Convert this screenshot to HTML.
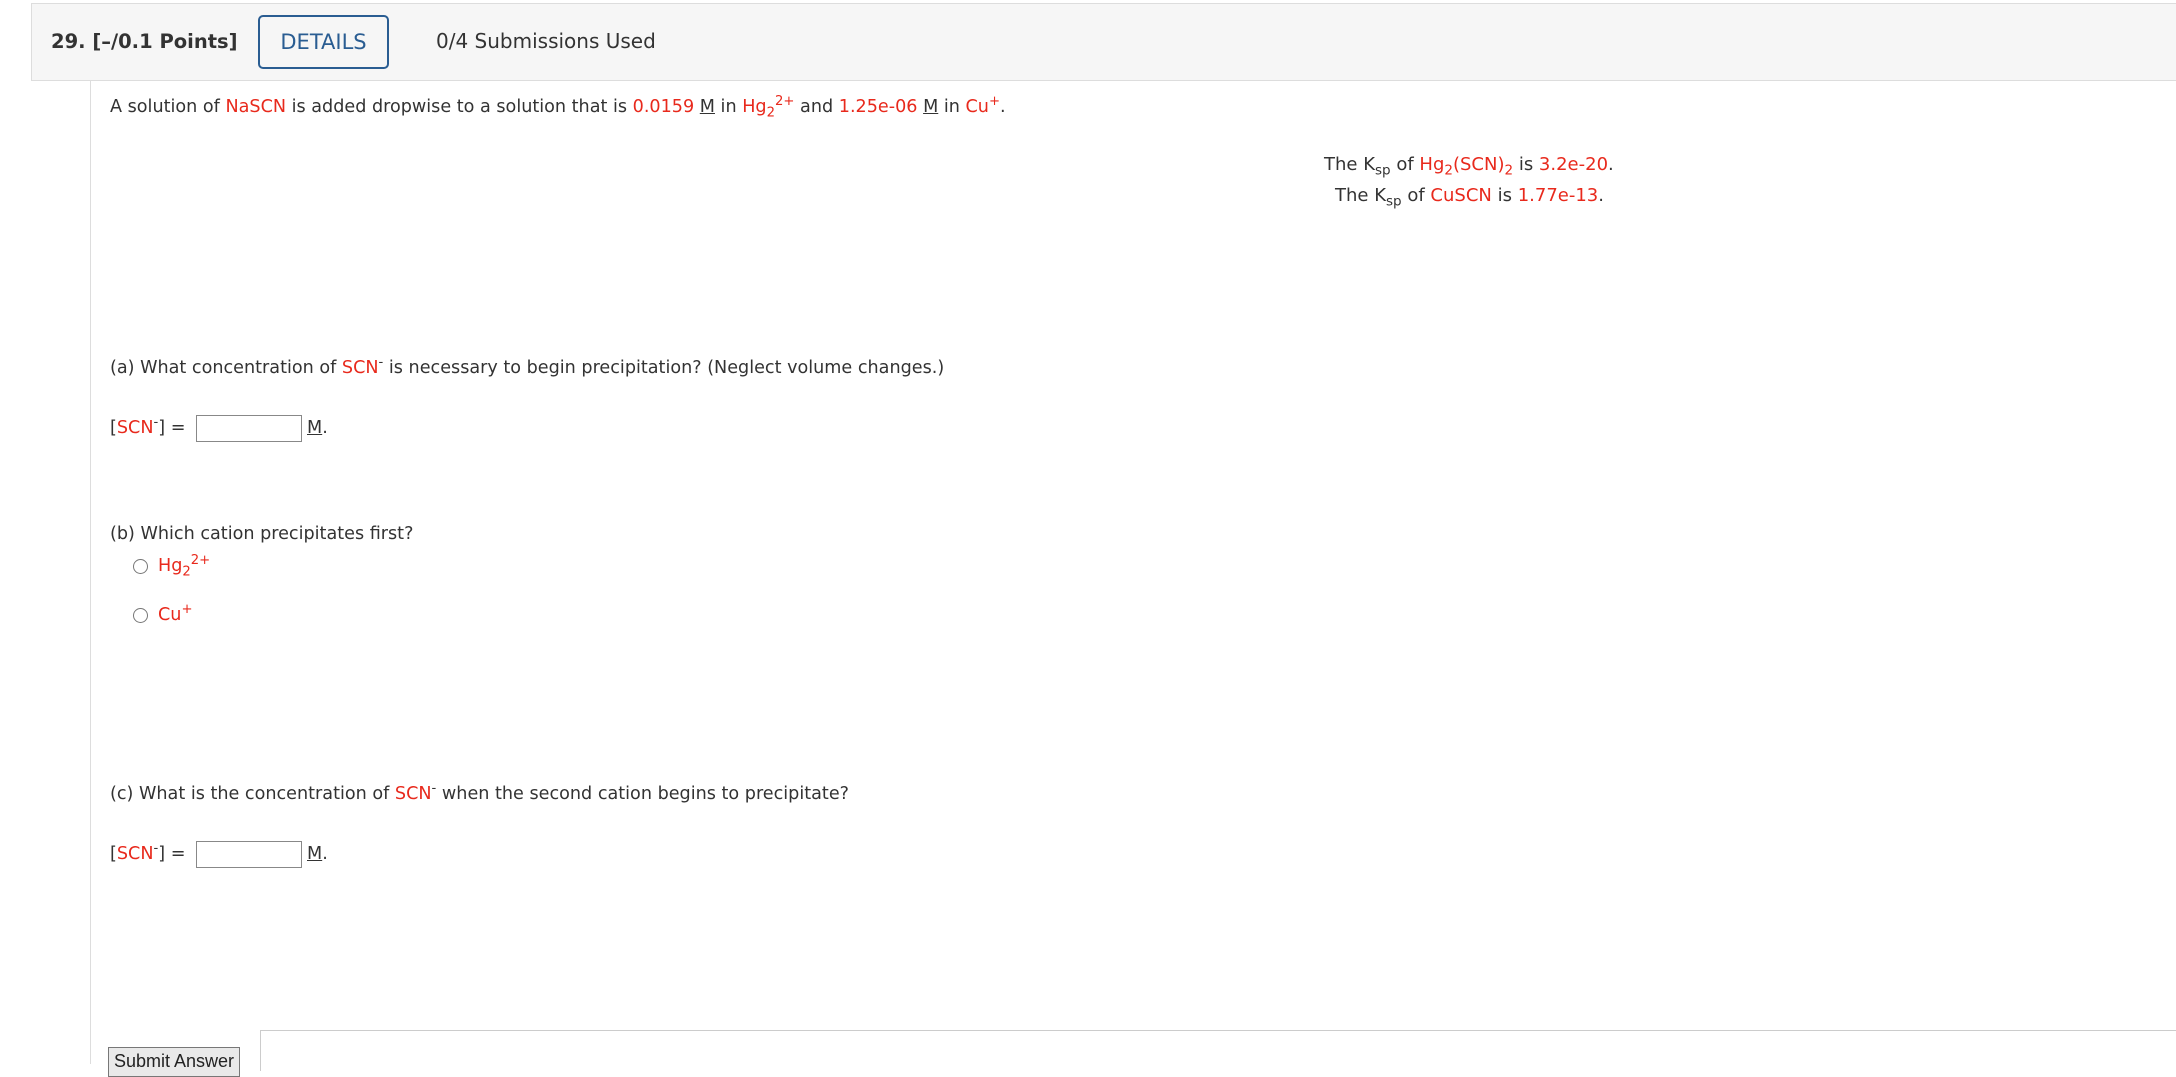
<!DOCTYPE html>
<html><head><meta charset="utf-8"><style>
body{margin:0;width:2176px;height:1064px;overflow:hidden;background:#fff;font-family:"DejaVu Sans",Verdana,sans-serif;color:#333;font-size:17.6px;position:relative}
.a{position:absolute;white-space:nowrap;line-height:1}
.r{color:#e8291c}
sub,sup{font-size:75%;line-height:0}
.hdr{position:absolute;left:31px;top:3px;width:2160px;height:76px;background:#f6f6f6;border:1px solid #ddd;border-right:none}
.det{position:absolute;left:258px;top:15px;width:127px;height:50px;border:2px solid #2a5d92;border-radius:5px;color:#2a5d92;font-size:21px;line-height:50px;text-align:center;box-sizing:content-box}
.inp{position:absolute;width:104px;height:25px;border:1px solid #888;background:#fff}
.u{text-decoration:underline}
.rad{position:absolute;width:13px;height:13px;border:1.5px solid #777;border-radius:50%}
</style></head><body>
<div class="hdr"></div>
<div class="a" style="left:51px;top:32px;font-size:19.5px;font-weight:bold">29. [–/0.1 Points]</div>
<div class="det">DETAILS</div>
<div class="a" style="left:436px;top:31px;font-size:20px">0/4 Submissions Used</div>
<div style="position:absolute;left:90px;top:80px;width:1px;height:984px;background:#ddd"></div>

<div class="a" style="left:110px;top:99px">A solution of <span class="r">NaSCN</span> is added dropwise to a solution that is <span class="r">0.0159</span> <span class="u">M</span> in <span class="r">Hg<sub>2</sub><sup>2+</sup></span> and <span class="r">1.25e-06</span> <span class="u">M</span> in <span class="r">Cu<sup>+</sup></span>.</div>

<div class="a" style="left:1324px;top:156px;font-size:18px">The K<sub>sp</sub> of <span class="r">Hg<sub>2</sub>(SCN)<sub>2</sub></span> is <span class="r">3.2e-20</span>.</div>
<div class="a" style="left:1335px;top:187px;font-size:18px">The K<sub>sp</sub> of <span class="r">CuSCN</span> is <span class="r">1.77e-13</span>.</div>

<div class="a" style="left:110px;top:360px">(a) What concentration of <span class="r">SCN</span><sup>-</sup> is necessary to begin precipitation? (Neglect volume changes.)</div>
<div class="a" style="left:110px;top:420px">[<span class="r">SCN</span><sup>-</sup>] =</div>
<div class="inp" style="left:196px;top:415px"></div>
<div class="a" style="left:307px;top:420px"><span class="u">M</span>.</div>

<div class="a" style="left:110px;top:526px">(b) Which cation precipitates first?</div>
<div class="rad" style="left:133px;top:559px"></div>
<div class="a r" style="left:158px;top:558px">Hg<sub>2</sub><sup>2+</sup></div>
<div class="rad" style="left:133px;top:608px"></div>
<div class="a r" style="left:158px;top:607px">Cu<sup>+</sup></div>

<div class="a" style="left:110px;top:786px">(c) What is the concentration of <span class="r">SCN</span><sup>-</sup> when the second cation begins to precipitate?</div>
<div class="a" style="left:110px;top:846px">[<span class="r">SCN</span><sup>-</sup>] =</div>
<div class="inp" style="left:196px;top:841px"></div>
<div class="a" style="left:307px;top:846px"><span class="u">M</span>.</div>

<div style="position:absolute;left:108px;top:1047px;width:132px;height:30px;border:1px solid #777;background:#e9e9e9;box-sizing:border-box;font-family:'Liberation Sans',sans-serif;font-size:18px;text-align:center;line-height:26px;color:#222">Submit Answer</div>
<div style="position:absolute;left:260px;top:1030px;width:1920px;height:40px;border-top:1px solid #ccc;border-left:1px solid #ccc"></div>
</body></html>
